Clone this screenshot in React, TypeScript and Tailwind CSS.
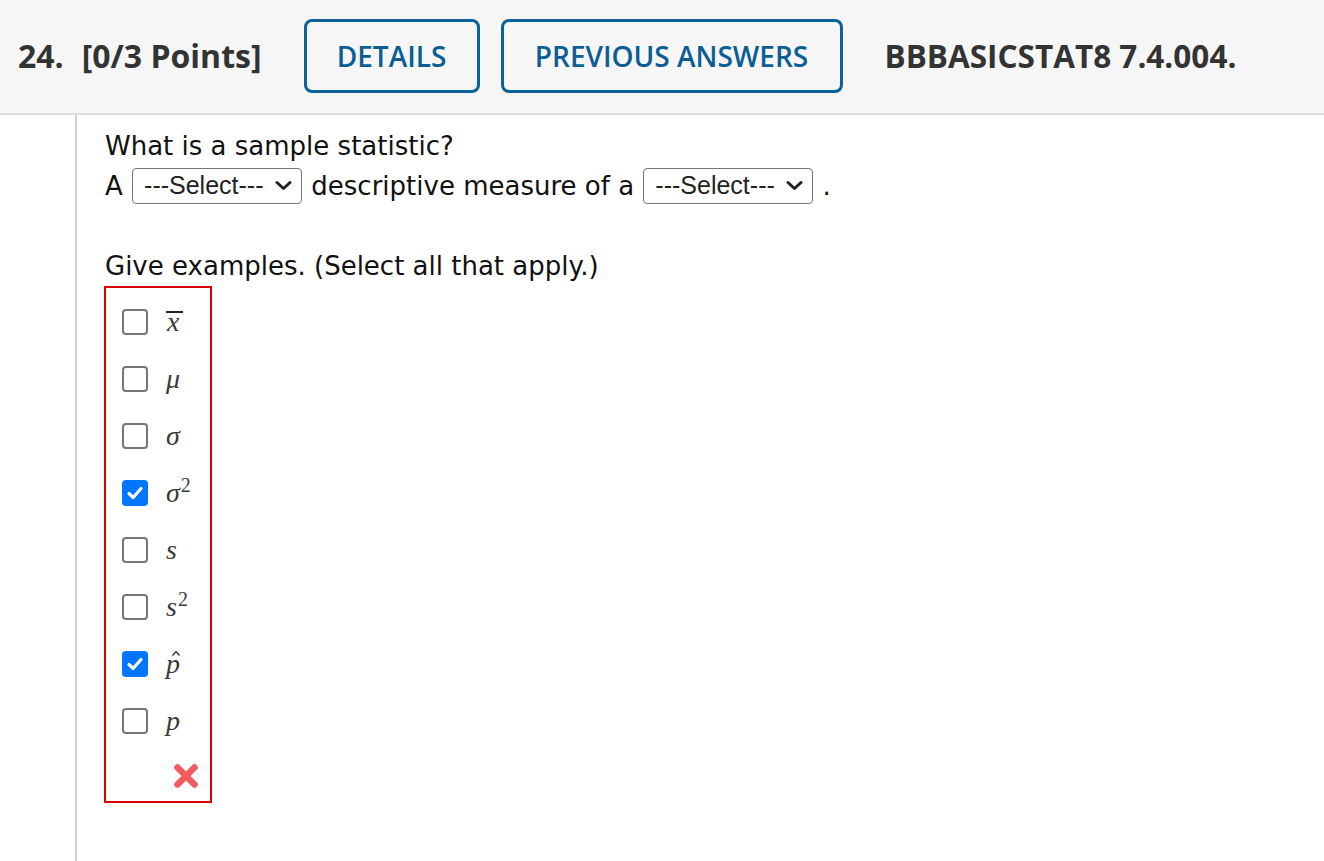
import React from 'react';

const Caja: React.FC<{ marcada?: boolean }> = ({ marcada }) =>
    marcada ? (
        <div className="w-[26px] h-[26px] rounded-[4px] bg-[#0075ff] flex items-center justify-center">
            <svg width="18" height="18" viewBox="0 0 18 18">
                <path d="M3 9.5 L7.2 13.5 L15 4.5" fill="none" stroke="white" strokeWidth="3.2" strokeLinecap="round" strokeLinejoin="round" />
            </svg>
        </div>
    ) : (
        <div className="w-[26px] h-[26px] rounded-[4px] border-2 border-[#767676] bg-white" />
    );

const Selector: React.FC = () => (
    <span className="inline-flex items-center justify-between align-middle w-[170px] h-[36px] border border-[#767676] rounded-[4px] pl-[11px] pr-[9px] mx-[1px] relative top-[-2px] text-[25px] leading-none text-[#222] font-['Liberation_Sans',Arial,sans-serif] bg-white">
        <span>---Select---</span>
        <svg width="17" height="11" viewBox="0 0 17 11">
            <path d="M2 2.5 L8.5 8.5 L15 2.5" fill="none" stroke="#222" strokeWidth="3" strokeLinecap="round" strokeLinejoin="round" />
        </svg>
    </span>
);

const Sup: React.FC = () => (
    <sup className="not-italic text-[20px] relative top-[-10px] ml-[1px]">2</sup>
);

const opciones: { simbolo: React.ReactNode; marcada?: boolean }[] = [
    { simbolo: <span className="inline-block border-t-2 border-[#222] pl-[1px] pr-[4px] leading-[17px]">x</span> },
    { simbolo: <span>μ</span> },
    { simbolo: <span>σ</span> },
    { simbolo: <span>σ<Sup /></span>, marcada: true },
    { simbolo: <span>s</span> },
    { simbolo: <span>s<Sup /></span> },
    {
        simbolo: (
            <span className="relative inline-block">
                p
                <svg width="10" height="7" viewBox="0 0 10 7" className="absolute left-[5px] top-[0px]">
                    <path d="M1.5 5.5 L5 1.5 L8.5 5.5" fill="none" stroke="#333" strokeWidth="1.3" />
                </svg>
            </span>
        ),
        marcada: true
    },
    { simbolo: <span>p</span> }
];

export default function App() {
    return (
        <div className="min-h-[861px] w-[1324px] bg-white flex flex-col">
            {/* Encabezado */}
            <div className="h-[115px] bg-[#f6f6f6] border-b-2 border-[#e0e0e0] flex items-center pl-[18px] pb-[2px] font-['Open_Sans',sans-serif] font-bold text-[#333] shrink-0">
                <span className="text-[32px]">24.</span>
                <span className="text-[32px] ml-[18px]">[0/3 Points]</span>
                <div className="ml-[42px] w-[176px] h-[74px] border-[3px] border-[#0b6199] rounded-[8px] flex items-center justify-center text-[28px] font-semibold text-[#0b5e94]">
                    DETAILS
                </div>
                <div className="ml-[21px] w-[342px] h-[74px] border-[3px] border-[#0b6199] rounded-[8px] flex items-center justify-center text-[28px] font-semibold text-[#0b5e94]">
                    PREVIOUS ANSWERS
                </div>
                <span className="ml-[42px] text-[31.5px]">BBBASICSTAT8 7.4.004.</span>
            </div>

            {/* Cuerpo */}
            <div className="flex flex-1">
                <div className="w-[75px] shrink-0" />
                <div className="flex-1 border-l-2 border-[#d0d0d0] pl-[28px] pt-[11px] pb-[40px] font-['DejaVu_Sans',Verdana,sans-serif] text-[26px] text-[#111] leading-[40px]">
                    <p>What is a sample statistic?</p>
                    <p>
                        A <Selector /> descriptive measure of a <Selector /> .
                    </p>
                    <p className="mt-[40px]">Give examples. (Select all that apply.)</p>

                    <div className="ml-[-1px] w-[108px] border-2 border-[#dd0000] pt-[5px] pb-[12px]">
                        {opciones.map((o, i) => (
                            <div key={i} className="h-[57px] flex items-center pl-[16px]">
                                <Caja marcada={o.marcada} />
                                <div className="ml-[18px] font-['Liberation_Serif','Times_New_Roman',serif] italic text-[28px] text-[#3a3a3a] leading-none">
                                    {o.simbolo}
                                </div>
                            </div>
                        ))}
                        <div className="mt-[14px] flex pl-[67px]">
                            <svg width="26" height="26" viewBox="0 0 26 26">
                                <path d="M4.5 4.5 L21.5 21.5 M21.5 4.5 L4.5 21.5" stroke="#f25a5f" strokeWidth="6.5" strokeLinecap="round" />
                            </svg>
                        </div>
                    </div>
                </div>
            </div>
        </div>
    );
}
